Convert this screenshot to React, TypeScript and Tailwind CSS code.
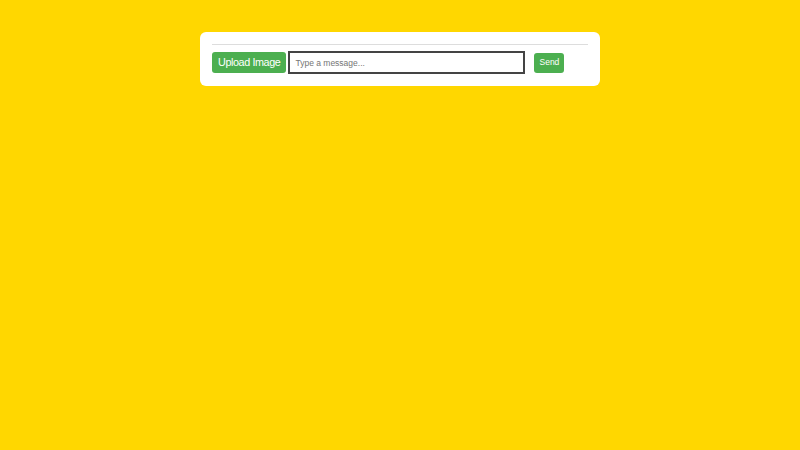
export default function App() {
  return (
    <div className="min-h-screen bg-[#ffd700] pt-8 font-['Liberation_Sans',Arial,sans-serif]">
      <div className="mx-auto w-[400px] rounded-[6px] bg-white p-3">
        {/* chat history (empty) */}
        <div className="border-b border-[#dddddd]" />
        <div className="mt-[6px] flex items-center">
          <button className="h-[21px] rounded-[3px] bg-[#4caf50] px-[6px] text-[10.8px] leading-none tracking-[-0.4px] text-white">
            Upload Image
          </button>
          <input
            type="text"
            placeholder="Type a message..."
            className="ml-[2px] h-[23px] w-[237px] border-2 border-[#444444] bg-white px-[5px] text-[8.5px] text-black outline-none placeholder:text-[#757575]"
          />
          <button className="ml-[9px] h-[20px] w-[30px] rounded-[3px] bg-[#4caf50] text-[8.5px] leading-none text-white">
            Send
          </button>
        </div>
      </div>
    </div>
  );
}
